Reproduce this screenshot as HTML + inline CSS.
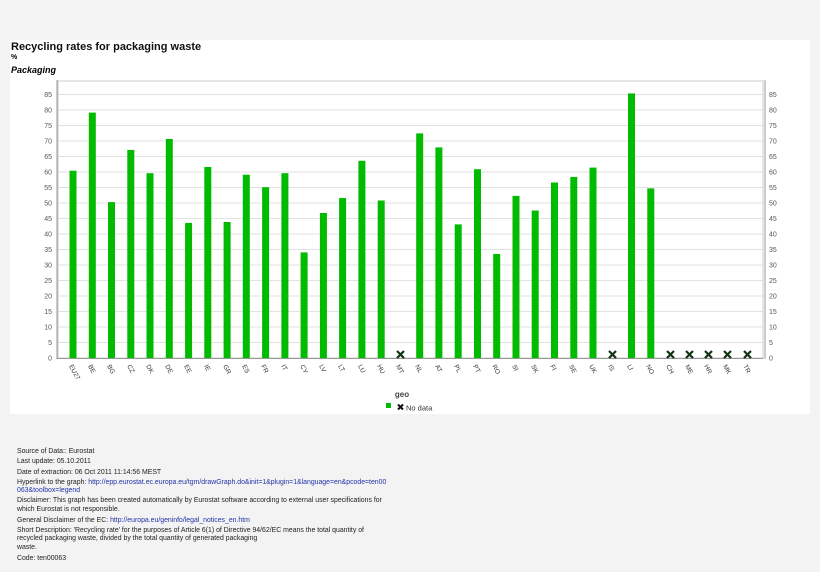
<!DOCTYPE html><html><head><style>
body{margin:0;width:820px;height:572px;background:#f3f3f3;font-family:"Liberation Sans",sans-serif;overflow:hidden;position:relative}
.panel{position:absolute;left:10px;top:40px;width:800px;height:374px;background:#fff}
.t{position:absolute;left:11px;top:41px;font-size:11px;font-weight:bold;color:#111}
.p{position:absolute;left:11px;top:54px;font-size:7px;font-weight:bold}
.pk{position:absolute;left:11px;top:65px;font-size:9px;font-weight:bold;font-style:italic}
.ft{position:absolute;left:17px;top:447px;font-size:6.9px;color:#222;line-height:10.3px;width:420px}
.ft a{color:#2233aa;text-decoration:none}
.w{line-height:8.4px;margin:1px 0 1.5px}
</style></head><body>
<div class="panel"></div>
<div class="t">Recycling rates for packaging waste</div>
<div class="p">%</div>
<div class="pk">Packaging</div>
<svg style="position:absolute;left:0;top:0" width="820" height="572" font-family="Liberation Sans, sans-serif">
<g stroke="#e2e2e2" stroke-width="1">
<line x1="58" x2="763" y1="94.5" y2="94.5"/><line x1="58" x2="763" y1="110" y2="110"/><line x1="58" x2="763" y1="125.5" y2="125.5"/><line x1="58" x2="763" y1="141" y2="141"/><line x1="58" x2="763" y1="156.5" y2="156.5"/><line x1="58" x2="763" y1="172" y2="172"/><line x1="58" x2="763" y1="187.5" y2="187.5"/><line x1="58" x2="763" y1="203" y2="203"/><line x1="58" x2="763" y1="218.5" y2="218.5"/><line x1="58" x2="763" y1="234" y2="234"/><line x1="58" x2="763" y1="249.5" y2="249.5"/><line x1="58" x2="763" y1="265" y2="265"/><line x1="58" x2="763" y1="280.5" y2="280.5"/><line x1="58" x2="763" y1="296" y2="296"/><line x1="58" x2="763" y1="311.5" y2="311.5"/><line x1="58" x2="763" y1="327" y2="327"/><line x1="58" x2="763" y1="342.5" y2="342.5"/>
</g>
<rect x="58" y="81" width="705" height="277" fill="none" stroke="#ccc"/>
<g stroke="#999"><line x1="57" y1="80" x2="57" y2="359"/><line x1="765" y1="80" x2="765" y2="359"/><line x1="57" y1="358.5" x2="763" y2="358.5"/></g>
<g font-size="7" fill="#555" text-anchor="end">
<text x="52" y="97">85</text><text x="52" y="112.5">80</text><text x="52" y="128">75</text><text x="52" y="143.5">70</text><text x="52" y="159">65</text><text x="52" y="174.5">60</text><text x="52" y="190">55</text><text x="52" y="205.5">50</text><text x="52" y="221">45</text><text x="52" y="236.5">40</text><text x="52" y="252">35</text><text x="52" y="267.5">30</text><text x="52" y="283">25</text><text x="52" y="298.5">20</text><text x="52" y="314">15</text><text x="52" y="329.5">10</text><text x="52" y="345">5</text><text x="52" y="360.5">0</text>
</g>
<g font-size="7" fill="#555">
<text x="769" y="97">85</text><text x="769" y="112.5">80</text><text x="769" y="128">75</text><text x="769" y="143.5">70</text><text x="769" y="159">65</text><text x="769" y="174.5">60</text><text x="769" y="190">55</text><text x="769" y="205.5">50</text><text x="769" y="221">45</text><text x="769" y="236.5">40</text><text x="769" y="252">35</text><text x="769" y="267.5">30</text><text x="769" y="283">25</text><text x="769" y="298.5">20</text><text x="769" y="314">15</text><text x="769" y="329.5">10</text><text x="769" y="345">5</text><text x="769" y="360.5">0</text>
</g>
<g fill="#00bb00">
<rect x="69.5" y="170.7" width="7" height="187.3"/>
<rect x="88.8" y="112.6" width="7" height="245.4"/>
<rect x="108" y="202.1" width="7" height="155.9"/>
<rect x="127.3" y="149.9" width="7" height="208.1"/>
<rect x="146.5" y="173.2" width="7" height="184.8"/>
<rect x="165.8" y="139" width="7" height="219"/>
<rect x="185.1" y="222.9" width="7" height="135.1"/>
<rect x="204.3" y="167" width="7" height="191"/>
<rect x="223.6" y="222" width="7" height="136"/>
<rect x="242.8" y="174.7" width="7" height="183.3"/>
<rect x="262.1" y="187.2" width="7" height="170.8"/>
<rect x="281.4" y="173.2" width="7" height="184.8"/>
<rect x="300.6" y="252.4" width="7" height="105.6"/>
<rect x="319.9" y="213" width="7" height="145"/>
<rect x="339.1" y="198" width="7" height="160"/>
<rect x="358.4" y="160.8" width="7" height="197.2"/>
<rect x="377.7" y="200.5" width="7" height="157.5"/>
<rect x="416.2" y="133.4" width="7" height="224.6"/>
<rect x="435.4" y="147.4" width="7" height="210.6"/>
<rect x="454.7" y="224.4" width="7" height="133.6"/>
<rect x="474" y="169.2" width="7" height="188.8"/>
<rect x="493.2" y="254" width="7" height="104"/>
<rect x="512.5" y="195.9" width="7" height="162.1"/>
<rect x="531.7" y="210.5" width="7" height="147.5"/>
<rect x="551" y="182.5" width="7" height="175.5"/>
<rect x="570.3" y="176.9" width="7" height="181.1"/>
<rect x="589.5" y="167.6" width="7" height="190.4"/>
<rect x="628" y="93.4" width="7" height="264.6"/>
<rect x="647.3" y="188.4" width="7" height="169.6"/>
</g>
<g stroke="#113311" stroke-width="2.2">
<path d="M397 351l7 7M404 351l-7 7"/>
<path d="M609 351l7 7M616 351l-7 7"/>
<path d="M667 351l7 7M674 351l-7 7"/>
<path d="M686 351l7 7M693 351l-7 7"/>
<path d="M705 351l7 7M712 351l-7 7"/>
<path d="M724 351l7 7M731 351l-7 7"/>
<path d="M744 351l7 7M751 351l-7 7"/>
</g>
<g font-size="6.5" fill="#333">
<text transform="translate(69,366) rotate(62)">EU27</text>
<text transform="translate(88,366) rotate(62)">BE</text>
<text transform="translate(107,366) rotate(62)">BG</text>
<text transform="translate(127,366) rotate(62)">CZ</text>
<text transform="translate(146,366) rotate(62)">DK</text>
<text transform="translate(165,366) rotate(62)">DE</text>
<text transform="translate(184,366) rotate(62)">EE</text>
<text transform="translate(204,366) rotate(62)">IE</text>
<text transform="translate(223,366) rotate(62)">GR</text>
<text transform="translate(242,366) rotate(62)">ES</text>
<text transform="translate(261,366) rotate(62)">FR</text>
<text transform="translate(281,366) rotate(62)">IT</text>
<text transform="translate(300,366) rotate(62)">CY</text>
<text transform="translate(319,366) rotate(62)">LV</text>
<text transform="translate(338,366) rotate(62)">LT</text>
<text transform="translate(358,366) rotate(62)">LU</text>
<text transform="translate(377,366) rotate(62)">HU</text>
<text transform="translate(396,366) rotate(62)">MT</text>
<text transform="translate(415,366) rotate(62)">NL</text>
<text transform="translate(435,366) rotate(62)">AT</text>
<text transform="translate(454,366) rotate(62)">PL</text>
<text transform="translate(473,366) rotate(62)">PT</text>
<text transform="translate(492,366) rotate(62)">RO</text>
<text transform="translate(512,366) rotate(62)">SI</text>
<text transform="translate(531,366) rotate(62)">SK</text>
<text transform="translate(550,366) rotate(62)">FI</text>
<text transform="translate(569,366) rotate(62)">SE</text>
<text transform="translate(589,366) rotate(62)">UK</text>
<text transform="translate(608,366) rotate(62)">IS</text>
<text transform="translate(627,366) rotate(62)">LI</text>
<text transform="translate(646,366) rotate(62)">NO</text>
<text transform="translate(666,366) rotate(62)">CH</text>
<text transform="translate(685,366) rotate(62)">ME</text>
<text transform="translate(704,366) rotate(62)">HR</text>
<text transform="translate(723,366) rotate(62)">MK</text>
<text transform="translate(743,366) rotate(62)">TR</text>
</g>
<text x="402" y="397" font-size="8" font-weight="bold" fill="#444" text-anchor="middle">geo</text>
<rect x="386" y="403" width="5" height="5" fill="#00bb00"/>
<path d="M398 404.5l5 5M403 404.5l-5 5" stroke="#111" stroke-width="2"/>
<text x="406" y="410.5" font-size="7.5" fill="#333">No data</text>
</svg>
<div class="ft">
<div>Source of Data:: Eurostat</div>
<div>Last update: 05.10.2011</div>
<div>Date of extraction: 06 Oct 2011 11:14:56 MEST</div>
<div class="w">Hyperlink to the graph: <a>http://epp.eurostat.ec.europa.eu/tgm/drawGraph.do&amp;init=1&amp;plugin=1&amp;language=en&amp;pcode=ten00<br>063&amp;toolbox=legend</a></div>
<div class="w">Disclaimer: This graph has been created automatically by Eurostat software according to external user specifications for<br>which Eurostat is not responsible.</div>
<div>General Disclaimer of the EC: <a>http://europa.eu/geninfo/legal_notices_en.htm</a></div>
<div class="w">Short Description: 'Recycling rate' for the purposes of Article 6(1) of Directive 94/62/EC means the total quantity of<br>recycled packaging waste, divided by the total quantity of generated packaging<br>waste.</div>
<div>Code: ten00063</div>
</div>
</body></html>
